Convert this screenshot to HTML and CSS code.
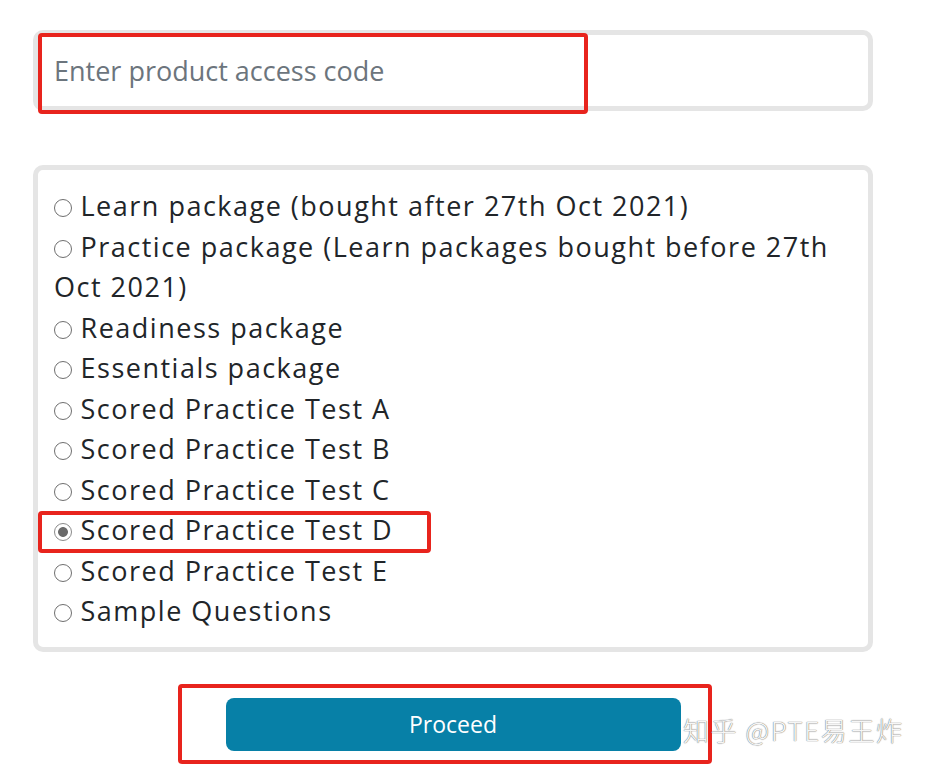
FILE: index.html
```html
<!DOCTYPE html>
<html>
<head>
    <meta charset="utf-8">
    <link rel="stylesheet" href="styles.css">
</head>
<body>
    <main class="redeem">
        <div class="code-field">
            <input class="code-input" type="text" placeholder="Enter product access code">
            <span class="mark mark-code"></span>
        </div>

        <ul class="packages">
            <li><label><input type="radio" name="pkg"> Learn package (bought after 27th Oct 2021)</label></li>
            <li><label><input type="radio" name="pkg"> Practice package (Learn packages bought before 27th Oct 2021)</label></li>
            <li><label><input type="radio" name="pkg"> Readiness package</label></li>
            <li><label><input type="radio" name="pkg"> Essentials package</label></li>
            <li><label><input type="radio" name="pkg"> Scored Practice Test A</label></li>
            <li><label><input type="radio" name="pkg"> Scored Practice Test B</label></li>
            <li><label><input type="radio" name="pkg"> Scored Practice Test C</label></li>
            <li class="picked"><label><input type="radio" name="pkg" checked> Scored Practice Test D</label><span class="mark mark-pick"></span></li>
            <li><label><input type="radio" name="pkg"> Scored Practice Test E</label></li>
            <li><label><input type="radio" name="pkg"> Sample Questions</label></li>
        </ul>

        <div class="actions">
            <div class="proceed-wrap">
                <button class="proceed">Proceed</button>
                <span class="mark mark-proceed"></span>
            </div>
        </div>
    </main>
    <div class="watermark">知乎 @PTE易王炸</div>
</body>
</html>
```

FILE: styles.css
```css
* {
    box-sizing: border-box;
}
body {
    margin: 0;
    background: #fff;
    font-family: "Open Sans", "Noto Sans", sans-serif;
    color: #212529;
}
.redeem {
    width: 840px;
    margin-left: 33px;
    padding: 30px 0 18px;
}

/* access code */
.code-field {
    position: relative;
}
.code-input {
    display: block;
    width: 100%;
    height: 81px;
    padding: 0 16px;
    border: 5px solid #e5e5e5;
    border-radius: 10px;
    font-family: inherit;
    font-size: 27px;
    color: #212529;
    outline: none;
}
.code-input::placeholder {
    color: #6c757d;
}

/* package list */
.packages {
    list-style: none;
    margin: 54px 0 0;
    padding: 16px 16px 15px;
    border: 5px solid #e5e5e5;
    border-radius: 10px;
    font-size: 27px;
    line-height: 40.5px;
    letter-spacing: 1.5px;
}
.packages li {
    position: relative;
}
.packages input[type="radio"] {
    appearance: none;
    width: 18px;
    height: 18px;
    margin: 0;
    border: 1.5px solid #6f6f6f;
    border-radius: 50%;
    background: #fff;
    vertical-align: -1px;
}
.packages input[type="radio"]:checked {
    border-color: #8a8a8a;
    background: radial-gradient(circle, #6a6a6a 0 4.5px, #fff 5.3px);
}

/* button */
.actions {
    display: flex;
    justify-content: center;
    margin-top: 46px;
}
.proceed-wrap {
    position: relative;
}
.proceed {
    display: block;
    width: 455px;
    height: 53px;
    border: 0;
    border-radius: 8px;
    background: #0780a7;
    color: #fff;
    font-family: "Open Sans", sans-serif;
    font-size: 23px;
}

/* red annotation frames */
.mark {
    position: absolute;
    border: 4px solid #e8241d;
    border-radius: 4px;
    pointer-events: none;
}
.mark-code {
    left: 5px;
    top: 3px;
    width: 550px;
    height: 81px;
}
.mark-pick {
    left: -16px;
    top: 1px;
    width: 393px;
    height: 42px;
}
.mark-proceed {
    left: -48px;
    top: -14px;
    width: 534px;
    height: 80px;
}

.watermark {
    position: absolute;
    left: 683px;
    top: 711px;
    font-family: "Noto Sans CJK SC", sans-serif;
    font-size: 26px;
    font-weight: 300;
    letter-spacing: 1.6px;
    color: #f6f6f6;
    text-shadow: 0 0 1px #7a7a7a, 0 0 1px #7a7a7a;
}
```
